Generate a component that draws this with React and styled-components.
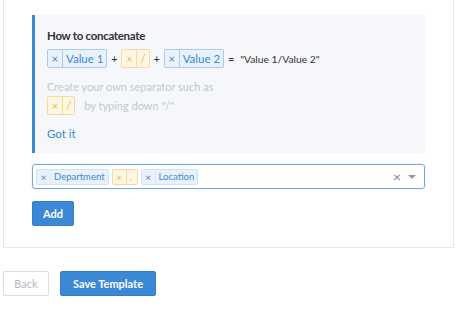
import styled, { createGlobalStyle } from "styled-components";

const GlobalStyle = createGlobalStyle`
  body {
    margin: 0;
    background: #fff;
    font-family: Lato, "Open Sans", "Liberation Sans", sans-serif;
    color: #333;
  }
`;

const Tag = ({ label, tone, small }) => (
  <TagBox tone={tone} small={small}>
    <TagIcon tone={tone} small={small}>×</TagIcon>
    <TagLabel small={small}>{label}</TagLabel>
  </TagBox>
);

const App = () => {
  return (
    <Page>
      <GlobalStyle />
      <Card>
        <Info>
          <Title>How to concatenate</Title>
          <Row>
            <Tag label="Value 1" />
            <Op>+</Op>
            <Tag label="/" tone="yellow" />
            <Op>+</Op>
            <Tag label="Value 2" />
            <Op>=</Op>
            <Result>"Value 1/Value 2"</Result>
          </Row>
          <Hint>Create your own separator such as</Hint>
          <HintRow>
            <Tag label="/" tone="yellow" />
            <Hint>by typing down "/"</Hint>
          </HintRow>
          <GotIt>Got it</GotIt>
        </Info>
        <Select>
          <Values>
            <Tag label="Department" small />
            <Tag label="," tone="yellow" small />
            <Tag label="Location" small />
          </Values>
          <Clear>×</Clear>
          <Caret />
        </Select>
        <Button>Add</Button>
      </Card>
      <Footer>
        <GhostButton>Back</GhostButton>
        <Button>Save Template</Button>
      </Footer>
    </Page>
  );
};

const Page = styled.div`
  width: 474px;
  height: 313px;
  overflow: hidden;
`;

const Card = styled.div`
  margin-left: 3px;
  width: 451px;
  border: 1px solid #e6e6e6;
  border-top: none;
  padding: 15px 28px 21px 28px;
  box-sizing: border-box;
`;

const Info = styled.div`
  background: #f5f7fa;
  border-left: 3px solid #3a88d6;
  padding: 13px 12px 10px 12px;
  height: 138px;
  box-sizing: border-box;
`;

const Title = styled.div`
  font-size: 11.5px;
  font-weight: 700;
  letter-spacing: -0.3px;
  color: #333;
  line-height: 16px;
`;

const Row = styled.div`
  display: flex;
  align-items: center;
  margin-top: 5px;
`;

const TagBox = styled.span`
  display: inline-flex;
  align-items: stretch;
  height: ${(p) => (p.small ? "16px" : "19px")};
  box-sizing: border-box;
  border: 1px solid ${(p) => (p.tone === "yellow" ? "#f7d99b" : "#a9cbee")};
  background: ${(p) => (p.tone === "yellow" ? "#fff7e3" : "#e9f2fb")};
  color: ${(p) => (p.tone === "yellow" ? "#f2b64b" : "#3a88d6")};
  border-radius: 2px;
  margin-right: ${(p) => (p.small ? "3px" : "0")};
  ${(p) => p.small && p.tone !== "yellow" && "border-color: #cfe1f5;"}
`;

const TagIcon = styled.span`
  display: flex;
  align-items: center;
  justify-content: center;
  width: ${(p) => (p.small ? "13px" : "14px")};
  font-size: ${(p) => (p.small ? "10px" : "11px")};
  border-right: 1px solid ${(p) => (p.tone === "yellow" ? "#f7d99b" : "#a9cbee")};
  ${(p) => p.small && p.tone !== "yellow" && "border-right-color: #dce9f7;"}
`;

const TagLabel = styled.span`
  display: flex;
  align-items: center;
  padding: 0 ${(p) => (p.small ? "3px" : "3px")};
  font-size: ${(p) => (p.small ? "9.5px" : "11.5px")};
  min-width: 4px;
`;

const Op = styled.span`
  font-size: 11px;
  color: #333;
  width: 14px;
  text-align: center;
`;

const Result = styled.span`
  font-size: 10.3px;
  color: #333;
  margin-left: 2px;
`;

const Hint = styled.div`
  font-size: 11px;
  color: #c3c8cf;
  line-height: 16px;
  margin-top: 11px;
`;

const HintRow = styled.div`
  display: flex;
  align-items: center;
  margin-top: 1px;
  gap: 9px;

  ${Hint} {
    margin-top: 0;
  }
`;

const GotIt = styled.div`
  font-size: 11.5px;
  color: #3a88d6;
  margin-top: 11px;
  line-height: 16px;
`;

const Select = styled.div`
  display: flex;
  align-items: center;
  margin-top: 11px;
  height: 25px;
  box-sizing: border-box;
  border: 1px solid #72a9e6;
  border-radius: 3px;
  padding: 0 8px 0 3px;
  box-shadow: 0 0 2px rgba(58, 136, 214, 0.25);
`;

const Values = styled.div`
  display: flex;
  flex: 1;
  align-items: center;
`;

const Clear = styled.span`
  font-size: 14px;
  color: #888;
  margin-right: 7px;
  line-height: 1;
`;

const Caret = styled.span`
  width: 0;
  height: 0;
  border-left: 4px solid transparent;
  border-right: 4px solid transparent;
  border-top: 4px solid #999;
`;

const Button = styled.button`
  display: flex;
  align-items: center;
  justify-content: center;
  height: 25px;
  padding: 0 10px;
  background: #3a88d6;
  color: #fff;
  border: 1px solid #347dc5;
  border-radius: 2px;
  font-family: inherit;
  font-size: 11px;
  font-weight: 700;
  margin-top: 12px;
`;

const Footer = styled.div`
  display: flex;
  gap: 11px;
  margin: 23px 0 0 3px;

  ${Button} {
    margin-top: 0;
    padding: 0 12px;
  }
`;

const GhostButton = styled.button`
  height: 25px;
  width: 46px;
  background: #fff;
  color: #b5b9bf;
  border: 1px solid #dedede;
  border-radius: 2px;
  font-family: inherit;
  font-size: 11px;
`;

export default App;
